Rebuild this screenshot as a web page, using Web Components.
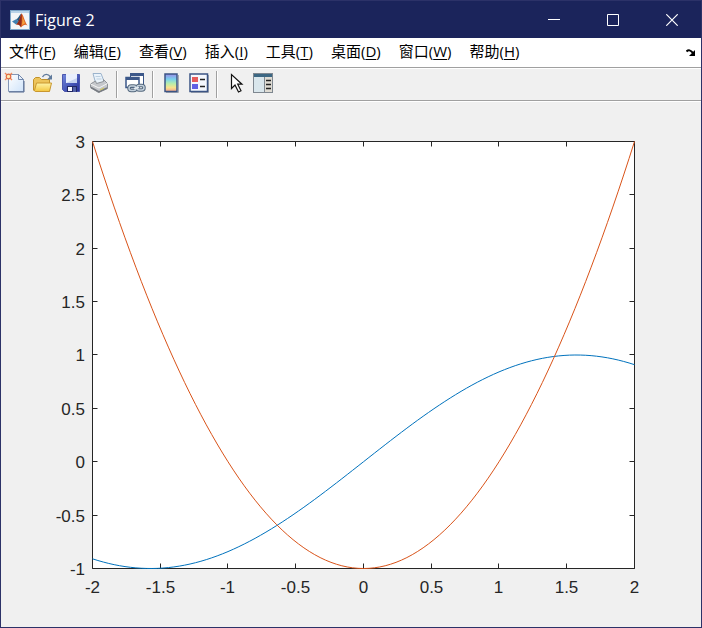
<!DOCTYPE html>
<html lang="zh-CN">
<head>
<meta charset="utf-8">
<title>Figure 2</title>
<style>
  body {
    margin: 0;
    background: #f0f0f0;
    font-family: "Open Sans", "Noto Sans CJK SC", sans-serif;
  }
</style>
</head>
<body>

<figure-window>
  <title-bar slot="title">Figure 2</title-bar>
  <menu-bar slot="menu">
    <menu-entry key="F">文件</menu-entry>
    <menu-entry key="E">编辑</menu-entry>
    <menu-entry key="V">查看</menu-entry>
    <menu-entry key="I">插入</menu-entry>
    <menu-entry key="T">工具</menu-entry>
    <menu-entry key="D">桌面</menu-entry>
    <menu-entry key="W">窗口</menu-entry>
    <menu-entry key="H">帮助</menu-entry>
  </menu-bar>
  <tool-bar slot="tools">
    <tool-button icon="new" label="新建图窗"></tool-button>
    <tool-button icon="open" label="打开文件"></tool-button>
    <tool-button icon="save" label="保存图窗"></tool-button>
    <tool-button icon="print" label="打印图窗"></tool-button>
    <tool-separator></tool-separator>
    <tool-button icon="link" label="链接绘图"></tool-button>
    <tool-separator></tool-separator>
    <tool-button icon="colorbar" label="插入颜色栏"></tool-button>
    <tool-button icon="legend" label="插入图例"></tool-button>
    <tool-separator></tool-separator>
    <tool-button icon="pointer" label="编辑绘图"></tool-button>
    <tool-button icon="inspector" label="打开属性检查器"></tool-button>
  </tool-bar>
  <line-plot></line-plot>
</figure-window>

<script>
const icons = {
  new: `
    <defs><linearGradient id="g" x1="0" y1="0" x2="1" y2="1"><stop offset="0" stop-color="#fff"/><stop offset="1" stop-color="#cfe3fa"/></linearGradient></defs>
    <path d="M3.5 1.5h10l5 5v12h-15z" fill="url(#g)" stroke="#8496b5"/>
    <path d="M4 19h15V8" fill="none" stroke="#52698f"/>
    <path d="M13.5 1.5v5h5z" fill="#e8eff9" stroke="#7188ad"/>
    <path d="M0 0l7 7M7 0L0 7" stroke="#f08a5c" stroke-width="1.4"/>
    <circle cx="3.5" cy="3.5" r="2.3" fill="#ffe9b0" stroke="#e0693f" stroke-width="1.2"/>`,
  open: `
    <defs><linearGradient id="g" x1="0" y1="0" x2="0" y2="1"><stop offset="0" stop-color="#fff4a6"/><stop offset="1" stop-color="#f3c640"/></linearGradient></defs>
    <path d="M.5 17V6.500l2-2h4l2 2h8V18H1.500z" fill="#edc45b" stroke="#c1922b"/>
    <path d="M3.500 10h15l-2 8.500h-14l-1-1z" fill="url(#g)" stroke="#c9972f"/>
    <path d="M9.500 4c2-3.500 5.500-3.500 8 0" fill="none" stroke="#5f7a9c" stroke-width="1.4"/>
    <path d="M19 1.500v5h-5z" fill="#5f7a9c"/>`,
  save: `
    <defs><linearGradient id="g" x1="0" y1="0" x2="1" y2="1"><stop offset="0" stop-color="#7187dc"/><stop offset="1" stop-color="#252f99"/></linearGradient></defs>
    <path d="M1.500 1.500h17v17h-15l-2-2z" fill="url(#g)" stroke="#4b56ae"/>
    <path d="M5 1h11v9H5z" fill="#e9effd"/>
    <path d="M5 10l11-5v5z" fill="#c5d2ef"/>
    <path d="M6 13h10v6H6z" fill="#222966"/>
    <path d="M7 14h4v4H7z" fill="#f7f7ff"/>
    <path d="M12 14h3v5h-3z" fill="#5261a7"/>`,
  print: `
    <path d="M4 .5h8l3.500 9-8.500 2z" fill="#eaf3fb" stroke="#9bb3cc"/>
    <path d="M6.500 3.500h5M7.500 6h5" stroke="#bccfdf"/>
    <path d="M1.500 11l5-3 1 2.500 7-2 0-2 4 4v5l-9 4-8-5z" fill="#c6c8cc" stroke="#8d9197"/>
    <path d="M1.500 11l8.500 4 8.500-4.500" fill="none" stroke="#f5f5f5"/>
    <path d="M2 14.500l8 4.500 8-4" fill="none" stroke="#777b82" stroke-width="1.500"/>
    <path d="M11 17l4-2" stroke="#d5c84e"/>`,
  link: `
    <rect x="5.500" y=".5" width="13" height="11" fill="#fff" stroke="#3b5789"/>
    <path d="M5 2h14" stroke="#3b5789" stroke-width="2"/>
    <rect x="1" y="4.500" width="13" height="10" fill="#fff" stroke="#3b5789" stroke-width="1.500"/>
    <path d="M1 6h13" stroke="#3b5789" stroke-width="2"/>
    <g fill="none" stroke="#54687e" stroke-width="3.500"><rect x="4" y="13" width="7" height="4.500" rx="2.200"/><rect x="12" y="12.500" width="7" height="4.500" rx="2.200"/></g>
    <g fill="none" stroke="#c3d0dc" stroke-width="1.500"><rect x="4" y="13" width="7" height="4.500" rx="2.200"/><rect x="12" y="12.500" width="7" height="4.500" rx="2.200"/></g>
    <path d="M9 15.500l5-1" stroke="#e6edf3" stroke-width="1.500"/>`,
  colorbar: `
    <defs><linearGradient id="g" x1="0" y1="0" x2="0" y2="1"><stop offset="0" stop-color="#9a8be8"/><stop offset=".3" stop-color="#79d2ed"/><stop offset=".55" stop-color="#b7edab"/><stop offset=".78" stop-color="#f9e28c"/><stop offset="1" stop-color="#f3a18e"/></linearGradient></defs>
    <path d="M5 19.500h12.500V2" fill="none" stroke="#a4a9b2"/>
    <rect x="4" y="1" width="12" height="17.500" fill="url(#g)" stroke="#3b5484" stroke-width="1.500"/>`,
  legend: `
    <path d="M2 19.500h17.500V2" fill="none" stroke="#a4a9b2"/>
    <rect x="1" y="1" width="17.500" height="17.500" fill="#f4f7fd" stroke="#3b5484" stroke-width="1.500"/>
    <path d="M3 4h6v5H3z" fill="#e65a5a"/>
    <path d="M3 11h6v5H3z" fill="#6060e4"/>
    <path d="M11 6.500h5M11 13.500h5" stroke="#222" stroke-width="1.500"/>`,
  pointer: `
    <path d="M6.500 1.500v14l3.500-3.500 3.500 7 2.500-1.200-3.300-6.600h4.300z" fill="#fff" stroke="#111" stroke-width="1.200"/>`,
  inspector: `
    <rect x=".5" y=".5" width="19" height="19" fill="#f7f7f7" stroke="#7e8790"/>
    <path d="M1 1h18v3H1z" fill="#3c6783"/>
    <path d="M1 4h10v15H1z" fill="#d9e6ec"/>
    <path d="M11.500 4v15" stroke="#7e8790"/>
    <path d="M12 4h7v15h-7z" fill="#dedbd3"/>
    <path d="M13 7.500h5M13 11.500h5M13 15.500h5" stroke="#222" stroke-width="1.500"/>`
};

class FigureWindow extends HTMLElement {
  constructor() {
    super();
    this.attachShadow({ mode: 'open' }).innerHTML = `
      <style>
        :host {
          display: flex;
          flex-direction: column;
          box-sizing: border-box;
          min-height: 100vh;
          border: 1px solid #2c3268;
          background: #f0f0f0;
        }
        main { flex: 1; }
      </style>
      <slot name="title"></slot>
      <slot name="menu"></slot>
      <slot name="tools"></slot>
      <main><slot></slot></main>
    `;
  }
}

class TitleBar extends HTMLElement {
  constructor() {
    super();
    this.attachShadow({ mode: 'open' }).innerHTML = `
      <style>
        :host {
          display: flex;
          align-items: center;
          height: 37px;
          padding-left: 9px;
          background: #1b245b;
          color: #fff;
          font-size: 16px;
        }
        svg { display: block; }
        .title { flex: 1; margin-left: 5px; }
        button {
          display: grid;
          place-items: center;
          width: 59px;
          height: 37px;
          padding: 0;
          border: 0;
          background: none;
        }
      </style>
      <svg width="20" height="20" viewBox="0 0 20 20">
        <rect x=".5" y=".5" width="19" height="19" fill="#f3f5f7" stroke="#7ea6c8"/>
        <path d="M1 1h18v2H1z" fill="#b9d3e8"/>
        <path d="M2 11.500l4.500-2.500 2.500 3-3 2.500z" fill="#3f7fb0"/>
        <path d="M6.500 9c2-.5 3-4.500 5-5.500L9 12z" fill="#24577f"/>
        <path d="M11.500 3.500c2 1 3 8 6 12-2-1.500-4-1-6.500 2-.5-2-2-3.500-5-3 3-1.500 4-8 5.500-11z" fill="#df6426"/>
        <path d="M11.500 3.500c-1.500 3-2.500 9.500-5.500 11 3-.5 4.500 1 5 3 .8-5 1-10 .5-14z" fill="#8f2b1c"/>
        <path d="M12 6c.8 3.500.5 7-.3 9.500 1.500-1.500 2.500-2 3.500-2z" fill="#f4a23c"/>
      </svg>
      <span class="title"><slot></slot></span>
      <button aria-label="最小化"><svg width="12" height="12"><path d="M0 5.500h12" stroke="#fff"/></svg></button>
      <button aria-label="最大化"><svg width="12" height="12"><path d="M.5.5h11v11H.5z" fill="none" stroke="#fff"/></svg></button>
      <button aria-label="关闭"><svg width="12" height="12"><path d="M.3.3l11.400 11.400M11.700.3L.3 11.700" stroke="#fff" stroke-width="1.200"/></svg></button>
    `;
  }
}

class MenuBar extends HTMLElement {
  constructor() {
    super();
    this.attachShadow({ mode: 'open' }).innerHTML = `
      <style>
        :host {
          display: flex;
          height: 29px;
          padding-right: 5px;
          background: #fff;
          border-bottom: 1px solid #a0a0a0;
        }
        nav { display: flex; flex: 1; gap: 2px; }
        button { padding: 0; border: 0; background: none; }
        svg { display: block; }
      </style>
      <nav><slot></slot></nav>
      <button aria-label="停靠">
        <svg width="10" height="8" viewBox="0 0 10 8">
          <path d="M.5 2.500C2.500.5 4.500 1 7 4" fill="none" stroke="#000" stroke-width="2"/>
          <path d="M9 1v6H3z"/>
        </svg>
      </button>
    `;
  }
}

class MenuEntry extends HTMLElement {
  constructor() {
    super();
    this.attachShadow({ mode: 'open' });
  }

  connectedCallback() {
    this.shadowRoot.innerHTML = `
      <style>
        :host { display: block; }
        button {
          display: block;
          padding: 0 8px;
          border: 0;
          background: none;
          color: #000;
          font: 15px/26px "Open Sans", "Noto Sans CJK SC", sans-serif;
          white-space: nowrap;
        }
        u { text-underline-offset: 2px; }
      </style>
      <button><slot></slot>(<u>${this.getAttribute('key')}</u>)</button>
    `;
  }
}

class ToolBar extends HTMLElement {
  constructor() {
    super();
    this.attachShadow({ mode: 'open' }).innerHTML = `
      <style>
        :host {
          display: flex;
          align-items: flex-start;
          height: 31px;
          border-top: 1px solid #fff;
          border-bottom: 1px solid #a0a0a0;
          box-shadow: 0 1px #fff;
        }
      </style>
      <slot></slot>
    `;
  }
}

class ToolButton extends HTMLElement {
  constructor() {
    super();
    this.attachShadow({ mode: 'open' });
  }

  connectedCallback() {
    this.shadowRoot.innerHTML = `
      <style>
        :host { display: block; }
        button {
          display: grid;
          place-items: center;
          width: 28px;
          height: 28px;
          padding: 0;
          border: 0;
          background: none;
        }
        svg { display: block; overflow: visible; }
      </style>
      <button aria-label="${this.getAttribute('label')}">
        <svg width="20" height="20" viewBox="0 0 20 20">${icons[this.getAttribute('icon')]}</svg>
      </button>
    `;
  }
}

class ToolSeparator extends HTMLElement {
  constructor() {
    super();
    this.attachShadow({ mode: 'open' }).innerHTML = `
      <style>
        :host { display: flex; justify-content: center; width: 8px; padding-top: 2px; }
        span {
          height: 27px;
          border-left: 1px solid #a0a0a0;
          border-right: 1px solid #fff;
        }
      </style>
      <span></span>
    `;
  }
}

class LinePlot extends HTMLElement {
  constructor() {
    super();
    this.attachShadow({ mode: 'open' });
  }

  connectedCallback() {
    // axes box inside the 700 x 526 drawing
    const box = { left: 91.5, right: 633.5, top: 40.5, bottom: 467.5 };
    const sx = x => box.left + (x + 2) / 4 * (box.right - box.left);
    const sy = y => box.bottom - (y + 1) / 4 * (box.bottom - box.top);
    const snap = v => Math.ceil(v) - 0.5;

    const curve = fn => {
      const points = [];
      for (let i = 0; i <= 100; i++) {
        const x = -2 + i * 0.04;
        points.push(`${sx(x).toFixed(2)},${sy(fn(x)).toFixed(2)}`);
      }
      return points.join(' ');
    };

    let ticks = '';
    let labels = '';
    for (let i = 0; i <= 8; i++) {
      const x = -2 + i / 2;
      const y = -1 + i / 2;
      const px = snap(sx(x));
      const py = snap(sy(y));
      ticks += `M${px} ${box.top}v5M${px} ${box.bottom}v-5M${box.left} ${py}h5M${box.right} ${py}h-5`;
      labels += `<text x="${px}" y="492" text-anchor="middle">${x}</text>`;
      labels += `<text x="84" y="${py + 6.5}" text-anchor="end">${y}</text>`;
    }

    this.shadowRoot.innerHTML = `
      <style>
        :host { display: block; }
        svg { display: block; width: 100%; height: auto; }
        text { font: 17px "Liberation Sans", Arial, sans-serif; fill: #262626; }
        .axes { fill: #fff; }
        .frame { fill: none; stroke: #262626; }
        polyline { fill: none; stroke-width: 1; }
      </style>
      <svg viewBox="0 0 700 526" role="img" aria-label="sin(x), x^2-1">
        <rect class="axes" x="${box.left}" y="${box.top}" width="${box.right - box.left}" height="${box.bottom - box.top}"/>
        <path class="frame" d="M${box.left} ${box.top}H${box.right}V${box.bottom}H${box.left}z${ticks}"/>
        <polyline stroke="#0072bd" points="${curve(Math.sin)}"/>
        <polyline stroke="#d95319" points="${curve(x => x * x - 1)}"/>
        ${labels}
      </svg>
    `;
  }
}

customElements.define('figure-window', FigureWindow);
customElements.define('title-bar', TitleBar);
customElements.define('menu-bar', MenuBar);
customElements.define('menu-entry', MenuEntry);
customElements.define('tool-bar', ToolBar);
customElements.define('tool-button', ToolButton);
customElements.define('tool-separator', ToolSeparator);
customElements.define('line-plot', LinePlot);
</script>
</body>
</html>
